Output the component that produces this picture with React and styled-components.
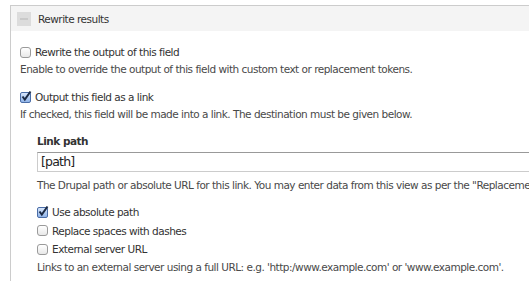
import React from 'react'
import styled, { createGlobalStyle } from 'styled-components'

const Global = createGlobalStyle`
  html, body {
    margin: 0;
    padding: 0;
    background: #fff;
    overflow: hidden;
  }
  body {
    font-family: "DejaVu Sans", Verdana, sans-serif;
    font-size: 10.5px;
    letter-spacing: -0.5px;
    color: #494949;
  }
`

const Page = styled.div`
  width: 529px;
  height: 281px;
  padding: 5px 0 0 10px;
  box-sizing: border-box;
  overflow: hidden;
`

const Fieldset = styled.div`
  width: 560px;
  border: 1px solid #ccc;
  border-right: none;
  height: 300px;
`

const Legend = styled.div`
  display: flex;
  align-items: center;
  gap: 7px;
  height: 25px;
  padding-left: 6px;
  background: #f4f4f4;
  color: #333;
`

const Toggle = styled.span`
  width: 14px;
  height: 14px;
  background: #dcdcdc;
  display: flex;
  align-items: center;
  justify-content: center;
  &::after {
    content: '';
    width: 8px;
    height: 2px;
    background: #c9c9c9;
  }
`

const Body = styled.div`
  padding: 12px 0 0 9px;
`

const Option = styled.label`
  display: flex;
  align-items: center;
  gap: 4px;
  height: ${p => p.$h || 18}px;
  color: #333;
`

const Box = styled.span`
  width: 9px;
  height: 9px;
  border: 1px solid ${p => (p.$checked ? '#4a6da7' : '#9a9a9a')};
  border-radius: ${p => (p.$checked ? '2px' : '3px')};
  background: ${p => (p.$checked ? 'linear-gradient(#d7e6fb, #8fb3e8)' : 'linear-gradient(#fff, #e8e8e8)')};
  position: relative;
  flex: none;
`

const Tick = styled.svg`
  position: absolute;
  left: -1px;
  top: -3px;
`

const Description = styled.div`
  height: 17px;
  line-height: 17px;
  white-space: nowrap;
  color: #494949;
  margin-top: ${p => p.$top || 0}px;
  margin-bottom: ${p => p.$gap || 0}px;
`

const Nested = styled.div`
  padding: 10px 0 0 17px;
`

const FieldLabel = styled.div`
  font-weight: bold;
  color: #333;
  height: 16px;
  line-height: 16px;
  margin-bottom: 3px;
`

const TextInput = styled.div`
  width: 520px;
  height: 18px;
  border: 1px solid #ccc;
  border-top-color: #999;
  padding-left: 3px;
  font-size: 12.5px;
  letter-spacing: -0.8px;
  line-height: 18px;
  color: #222;
`

const Spacer = styled.div`
  height: ${p => p.$h}px;
`

const Checkbox = ({ checked, h, children }) => (
  <Option $h={h}>
    <Box $checked={checked}>
      {checked && (
        <Tick width="12" height="12" viewBox="0 0 12 12">
          <path d="M2.5 6.5 L4.8 9.5 L10.5 1.5" fill="none" stroke="#1b2a44" strokeWidth="2" />
        </Tick>
      )}
    </Box>
    {children}
  </Option>
)

export default function App() {
  return (
    <Page>
      <Global />
      <Fieldset>
        <Legend>
          <Toggle />
          Rewrite results
        </Legend>
        <Body>
          <Checkbox>Rewrite the output of this field</Checkbox>
          <Description $gap={10}>
            Enable to override the output of this field with custom text or replacement tokens.
          </Description>
          <Checkbox checked>Output this field as a link</Checkbox>
          <Description>
            If checked, this field will be made into a link. The destination must be given below.
          </Description>
          <Nested>
            <FieldLabel>Link path</FieldLabel>
            <TextInput>[path]</TextInput>
            <Description $top={5}>
              The Drupal path or absolute URL for this link. You may enter data from this view as per the "Replacement patterns" below.
            </Description>
            <Spacer $h={9} />
            <Checkbox checked h={18.5}>Use absolute path</Checkbox>
            <Checkbox h={18.5}>Replace spaces with dashes</Checkbox>
            <Checkbox h={18.5}>External server URL</Checkbox>
            <Description>
              Links to an external server using a full URL: e.g. 'http:/www.example.com' or 'www.example.com'.
            </Description>
          </Nested>
        </Body>
      </Fieldset>
    </Page>
  )
}
